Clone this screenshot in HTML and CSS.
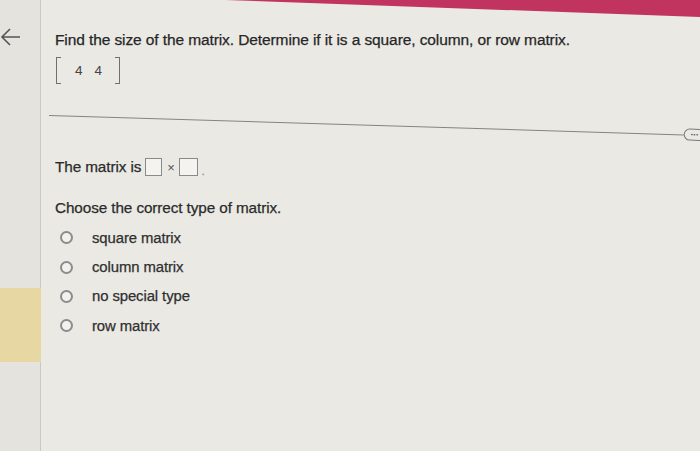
FILE: index.html
```html
<!DOCTYPE html>
<html>
<head>
<meta charset="utf-8">
<link rel="stylesheet" href="styles.css">
</head>
<body>
<div class="page">
  <aside class="side">
    <div class="back">
      <svg width="22" height="20" viewBox="0 0 22 20"><path d="M20 10H3M10 2L2 10l8 8" fill="none" stroke="#555" stroke-width="1.6"/></svg>
    </div>
    <div class="side-fill"></div>
    <div class="side-mark"></div>
  </aside>
  <main class="main">
    <div class="topband"></div>
    <p class="question">Find the size of the matrix. Determine if it is a square, column, or row matrix.</p>
    <div class="matrix">
      <span class="br br-l"></span>
      <span class="cell">4</span>
      <span class="cell">4</span>
      <span class="br br-r"></span>
    </div>
    <div class="divider">
      <div class="rule"></div>
      <div class="more">•••</div>
    </div>
    <p class="line size">The matrix is <span class="box"></span><span class="times">×</span><span class="box"></span><span class="dot">.</span></p>
    <p class="line choose">Choose the correct type of matrix.</p>
    <ul class="options">
      <li><span class="radio"></span>square matrix</li>
      <li><span class="radio"></span>column matrix</li>
      <li><span class="radio"></span>no special type</li>
      <li><span class="radio"></span>row matrix</li>
    </ul>
  </main>
</div>
</body>
</html>
```
FILE: styles.css
```css
html, body {
  margin: 0;
  padding: 0;
}
body {
  width: 700px;
  height: 451px;
  overflow: hidden;
  background: #eae9e4;
  font-family: "Liberation Sans", Arial, sans-serif;
  color: #2b2b2b;
  -webkit-text-stroke: 0.25px currentColor;
}
.page {
  display: flex;
  height: 451px;
}
.side {
  width: 40px;
  flex: none;
  background: #e4e3de;
  border-right: 1px solid #c9c8c3;
  display: flex;
  flex-direction: column;
}
.back {
  height: 26px;
  margin-top: 27px;
}
.side-fill {
  height: 235px;
}
.side-mark {
  height: 74px;
  background: #e6d7a3;
  margin-right: -1px;
}
.main {
  flex: 1;
  display: flex;
  flex-direction: column;
  padding-left: 14px;
}
.topband {
  height: 17px;
  flex: none;
  margin-left: -14px;
  background: #c0345f;
  clip-path: polygon(28% 0, 100% 0, 100% 100%);
}
.question {
  margin: 14px 0 0 0;
  height: 18px;
  line-height: 18px;
  font-size: 15.5px;
  letter-spacing: -0.1px;
  color: #262626;
  white-space: nowrap;
}
.matrix {
  display: flex;
  align-items: center;
  height: 28px;
  margin-top: 7px;
  margin-left: 1px;
  gap: 12px;
  font-size: 13.5px;
  color: #444;
  -webkit-text-stroke: 0;
}
.br {
  width: 5px;
  height: 27px;
  border: 1.4px solid #707070;
  box-sizing: border-box;
}
.br-l { border-right: none; margin-right: 2px; }
.br-r { border-left: none; margin-left: 1px; }
.divider {
  display: flex;
  align-items: center;
  height: 12px;
  margin: 25px 0 0 -6px;
  transform: rotate(1.75deg);
  transform-origin: left center;
}
.rule {
  flex: 1;
  height: 1px;
  background: #85857f;
}
.more {
  width: 20px;
  height: 10px;
  border: 1px solid #777;
  border-radius: 6px;
  font-size: 6px;
  line-height: 10px;
  text-align: center;
  color: #555;
  letter-spacing: 0.5px;
  margin-right: -6px;
  -webkit-text-stroke: 0;
}
.line {
  margin: 0;
  font-size: 15.3px;
  letter-spacing: -0.1px;
  display: flex;
  align-items: center;
  white-space: nowrap;
}
.size {
  margin-top: 36px;
  height: 20px;
}
.box {
  width: 17px;
  height: 18px;
  border: 1.3px solid #8a8a8a;
  margin-left: 4px;
  box-sizing: border-box;
  background: #f4f3ef;
}
.times {
  font-size: 13px;
  margin: 0 4px 0 5px;
  color: #555;
  -webkit-text-stroke: 0;
}
.size .times + .box { width: 19px; margin-left: 0; }
.dot { font-size: 10px; margin-left: 4px; color: #888; align-self: flex-end; }
.choose {
  margin-top: 22px;
  height: 18px;
}
.options {
  list-style: none;
  margin: 6px 0 0 0;
  padding: 0;
}
.options li {
  display: flex;
  align-items: center;
  height: 29.4px;
  font-size: 14.9px;
  letter-spacing: -0.1px;
  color: #303030;
  white-space: nowrap;
}
.radio {
  width: 13px;
  height: 13px;
  border: 2px solid #8c8c8c;
  border-radius: 50%;
  box-sizing: border-box;
  margin-left: 5px;
  margin-right: 19px;
  background: #f2f1ed;
}
```
